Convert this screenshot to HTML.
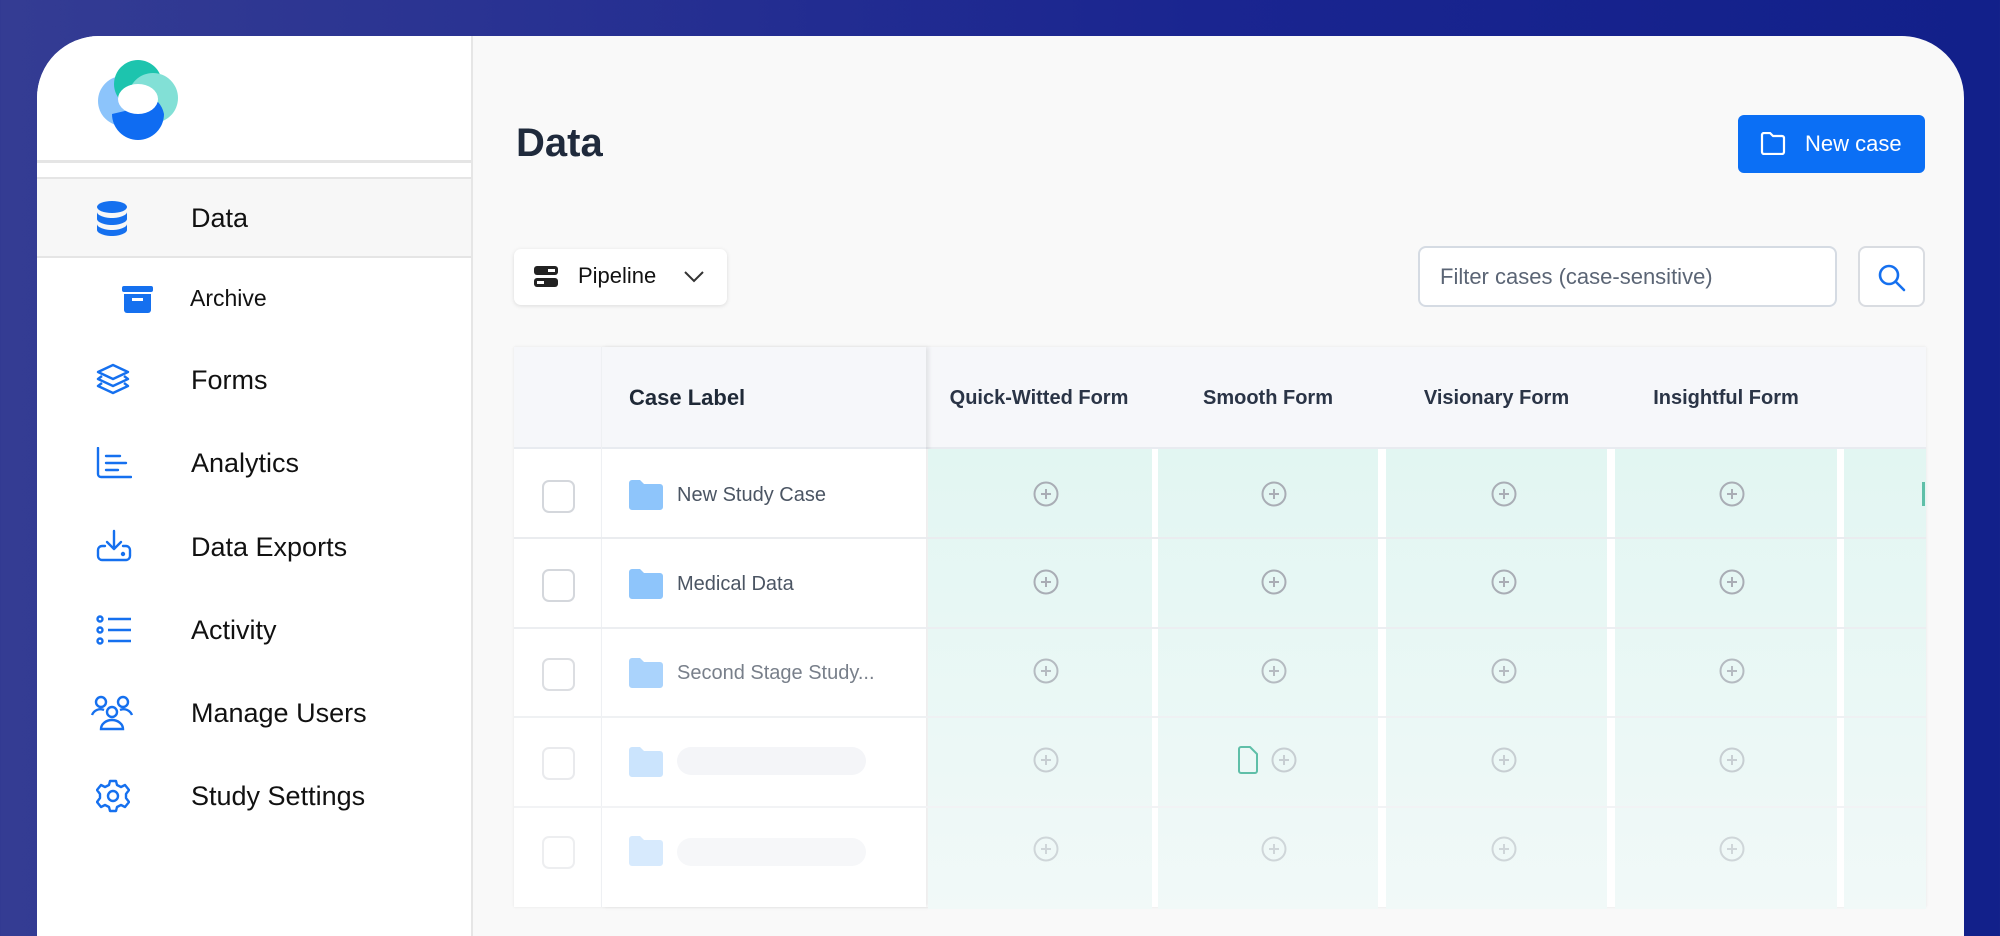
<!DOCTYPE html>
<html><head><meta charset="utf-8"><style>
*{box-sizing:border-box;margin:0;padding:0}
body{width:2000px;height:898px;overflow:hidden;background:linear-gradient(90deg,#343c93,#1a2590 60%,#12208a);font-family:"Liberation Sans",sans-serif;position:relative}
.panel{position:absolute;left:37px;top:36px;width:1927px;height:900px;background:#f9f9f9;border-radius:62px 62px 0 0;overflow:hidden}
.side{position:absolute;left:0;top:0;width:436px;height:900px;background:#fff;border-right:2px solid #e6e6e6}
.abs{position:absolute}
.nav{position:absolute;left:0;font-size:27px;color:#111;display:flex;align-items:center}
.hd{font-weight:bold;color:#2a3446;font-size:20px;position:absolute;top:347px;height:102px;line-height:102px;text-align:center}
.cb{position:absolute;left:542px;width:33px;height:33px;border:2px solid #d4d7dc;border-radius:7px;background:#fff}
.lbl{position:absolute;left:677px;font-size:20px;color:#4b5563}
.pl{position:absolute;width:26px;height:26px}
</style></head><body>
<div class="panel">
<div class="side">
 <svg class="abs" style="left:59px;top:22px" width="84" height="84" viewBox="0 0 84 84">
  <circle cx="27" cy="43" r="25" fill="#8cc4fb"/>
  <circle cx="42" cy="26" r="24" fill="#1dc4ae"/>
  <circle cx="57" cy="40" r="25" fill="#82e0d6"/>
  <path d="M16 56 A25 25 0 0 0 68 56 A25 25 0 0 0 62 44 L42 50 Z" fill="#0f6cf2"/>
  <ellipse cx="42" cy="41" rx="20" ry="15" fill="#fff"/>
 </svg>
 <div class="abs" style="left:0;top:124px;width:434px;height:3px;background:#e5e5e5"></div>
 <div class="abs" style="left:0;top:141px;width:434px;height:81px;background:#f7f7f7;border-top:2px solid #e5e5e5;border-bottom:2px solid #e5e5e5"></div>
 <svg class="abs" style="left:59px;top:165px" width="32" height="35" viewBox="0 0 32 35" fill="#1570ef"><ellipse cx="16" cy="6" rx="15" ry="6"/><path d="M1 11c0 3 7 6 15 6s15-3 15-6v7c0 3-7 6-15 6S1 21 1 18z"/><path d="M1 23c0 3 7 6 15 6s15-3 15-6v6c0 3-7 6-15 6S1 32 1 29z"/></svg>
 <div class="nav" style="left:154px;top:162px;height:40px">Data</div>
 <svg class="abs" style="left:85px;top:250px" width="31" height="27" viewBox="0 0 31 27" fill="#1570ef"><rect x="0" y="0" width="31" height="6" rx="2"/><path d="M2 8h27v16a3 3 0 0 1-3 3H5a3 3 0 0 1-3-3z"/><rect x="10" y="12" width="11" height="3" fill="#fff"/></svg>
 <div class="nav" style="left:153px;top:244px;height:36px;font-size:23px">Archive</div>
 <svg class="abs" style="left:58px;top:326px" width="36" height="36" viewBox="0 0 36 36" fill="none" stroke="#1570ef" stroke-width="2.4" stroke-linejoin="round"><path d="M18 3L33 10 18 17 3 10z"/><path d="M7 14L3 17l15 7 15-7-4-3"/><path d="M7 21l-4 3 15 7 15-7-4-3"/></svg>
 <div class="nav" style="left:154px;top:324px;height:40px">Forms</div>
 <svg class="abs" style="left:59px;top:411px" width="36" height="32" viewBox="0 0 36 32" fill="none" stroke="#1570ef" stroke-width="2.4" stroke-linecap="round"><path d="M2 1v26a3 3 0 0 0 3 3h30"/><path d="M10 9h14M10 16h20M10 23h12"/></svg>
 <div class="nav" style="left:154px;top:407px;height:40px">Analytics</div>
 <svg class="abs" style="left:59px;top:493px" width="36" height="36" viewBox="0 0 36 36" fill="none" stroke="#1570ef" stroke-width="2.4" stroke-linecap="round" stroke-linejoin="round"><path d="M18 2v18M11 13l7 7 7-7"/><path d="M9 17H6a4 4 0 0 0-4 4v6a4 4 0 0 0 4 4h24a4 4 0 0 0 4-4v-6a4 4 0 0 0-4-4h-3"/><circle cx="27" cy="25" r="1" fill="#1570ef"/></svg>
 <div class="nav" style="left:154px;top:491px;height:40px">Data Exports</div>
 <svg class="abs" style="left:59px;top:579px" width="36" height="30" viewBox="0 0 36 30" fill="none" stroke="#1570ef" stroke-width="2.4"><circle cx="4" cy="4" r="2.5"/><circle cx="4" cy="15" r="2.5"/><circle cx="4" cy="26" r="2.5"/><path d="M12 4h23M12 15h23M12 26h23"/></svg>
 <div class="nav" style="left:154px;top:574px;height:40px">Activity</div>
 <svg class="abs" style="left:53px;top:659px" width="44" height="36" viewBox="0 0 44 36" fill="none" stroke="#1570ef" stroke-width="2.4"><circle cx="11" cy="7" r="5"/><circle cx="33" cy="7" r="5"/><circle cx="22" cy="17" r="5"/><path d="M2 20a9 9 0 0 1 12-5M42 20a9 9 0 0 0-12-5"/><path d="M11 34a11 9 0 0 1 22 0z"/></svg>
 <div class="nav" style="left:154px;top:657px;height:40px">Manage Users</div>
 <svg class="abs" style="left:59px;top:743px" width="34" height="34" viewBox="0 0 34 34" fill="none" stroke="#1570ef" stroke-width="2.4" stroke-linejoin="round"><path d="M14 2h6l1 4 4 2 4-2 4 5-3 4v4l3 4-4 5-4-2-4 2-1 4h-6l-1-4-4-2-4 2-4-5 3-4v-4L1 11l4-5 4 2 4-2z"/><circle cx="17" cy="17" r="5"/></svg>
 <div class="nav" style="left:154px;top:740px;height:40px">Study Settings</div>
</div>
</div>
<div class="abs" style="left:516px;top:121px;font-size:40px;font-weight:bold;color:#1f2a3c">Data</div>
<div class="abs" style="left:1738px;top:115px;width:187px;height:58px;background:#0b6ff5;border-radius:6px;color:#fff;font-size:22px;line-height:58px;padding-left:67px">New case</div>
<svg class="abs" style="left:1760px;top:132px" width="26" height="23" viewBox="0 0 26 23" fill="none" stroke="#fff" stroke-width="2.2" stroke-linejoin="round"><path d="M2 3a2 2 0 0 1 2-2h6l3 3h9a2 2 0 0 1 2 2v14a2 2 0 0 1-2 2H4a2 2 0 0 1-2-2z"/></svg>
<div class="abs" style="left:514px;top:249px;width:213px;height:56px;background:#fff;border-radius:7px;box-shadow:0 1px 4px rgba(0,0,0,.12)"></div>
<svg class="abs" style="left:534px;top:266px" width="24" height="22" viewBox="0 0 24 22" fill="#222"><rect x="0" y="0" width="24" height="9" rx="3"/><rect x="0" y="12" width="24" height="9" rx="3"/><rect x="14" y="3" width="7" height="3" fill="#fff"/><rect x="3" y="15" width="7" height="3" fill="#fff"/></svg>
<div class="abs" style="left:578px;top:263px;font-size:22px;color:#111">Pipeline</div>
<svg class="abs" style="left:683px;top:270px" width="22" height="14" viewBox="0 0 22 14" fill="none" stroke="#333" stroke-width="2"><path d="M2 2l9 9 9-9"/></svg>
<div class="abs" style="left:1418px;top:246px;width:419px;height:61px;background:#fff;border:2px solid #d5dbe3;border-radius:8px;font-size:22px;color:#5b6575;line-height:57px;padding-left:20px">Filter cases (case-sensitive)</div>
<div class="abs" style="left:1858px;top:246px;width:67px;height:61px;background:#fff;border:2px solid #d9dce1;border-radius:8px"></div>
<svg class="abs" style="left:1877px;top:263px" width="30" height="30" viewBox="0 0 30 30" fill="none" stroke="#1570ef" stroke-width="2.6" stroke-linecap="round"><circle cx="12" cy="12" r="9"/><path d="M19 19l8 8"/></svg>

<div class="abs" style="left:514px;top:347px;width:1412px;height:560px;background:#fff;box-shadow:0 0 3px rgba(0,0,0,.08)"></div>
<div class="abs" style="left:514px;top:347px;width:1412px;height:102px;background:#f6f7fa;border-bottom:2px solid #e8ebf0"></div>
<div class="abs" style="left:601px;top:347px;width:325px;height:560px;border-left:1px solid #eef0f3;box-shadow:3px 0 4px rgba(0,0,0,.08)"></div>
<div class="hd" style="left:629px;text-align:left;font-size:22px;color:#1f2937">Case Label</div>
<div class="hd" style="left:926px;width:226px">Quick-Witted Form</div>
<div class="hd" style="left:1158px;width:220px">Smooth Form</div>
<div class="hd" style="left:1386px;width:221px">Visionary Form</div>
<div class="hd" style="left:1615px;width:222px">Insightful Form</div>

<div class="abs" style="left:928px;top:449px;width:224px;height:460px;background:linear-gradient(#e2f6f2,#f1f9f8)"></div>
<div class="abs" style="left:1158px;top:449px;width:220px;height:460px;background:linear-gradient(#e2f6f2,#f1f9f8)"></div>
<div class="abs" style="left:1386px;top:449px;width:221px;height:460px;background:linear-gradient(#e2f6f2,#f1f9f8)"></div>
<div class="abs" style="left:1615px;top:449px;width:222px;height:460px;background:linear-gradient(#e2f6f2,#f1f9f8)"></div>
<div class="abs" style="left:1844px;top:449px;width:82px;height:460px;background:linear-gradient(#e2f6f2,#f1f9f8)"></div>
<div class="abs" style="left:1922px;top:482px;width:3px;height:24px;background:#5fbfa8"></div>
<div class="abs" style="left:514px;top:537px;width:1412px;height:2px;background:#eaecef"></div>
<div class="abs" style="left:514px;top:627px;width:1412px;height:2px;background:#eceef1"></div>
<div class="abs" style="left:514px;top:716px;width:1412px;height:2px;background:#eff1f3"></div>
<div class="abs" style="left:514px;top:806px;width:1412px;height:2px;background:#f2f3f5"></div>

<div class="cb" style="top:480px"></div>
<div class="cb" style="top:569px"></div>
<div class="cb" style="top:658px;opacity:.8"></div>
<div class="cb" style="top:747px;opacity:.5"></div>
<div class="cb" style="top:836px;opacity:.4"></div>

<svg class="abs" style="left:629px;top:480px" width="34" height="30" viewBox="0 0 34 30"><path d="M0 3a3 3 0 0 1 3-3h8l4 4h16a3 3 0 0 1 3 3v20a3 3 0 0 1-3 3H3a3 3 0 0 1-3-3z" fill="#8ec5fb"/></svg>
<svg class="abs" style="left:629px;top:569px" width="34" height="30" viewBox="0 0 34 30"><path d="M0 3a3 3 0 0 1 3-3h8l4 4h16a3 3 0 0 1 3 3v20a3 3 0 0 1-3 3H3a3 3 0 0 1-3-3z" fill="#8ec5fb"/></svg>
<svg class="abs" style="left:629px;top:658px;opacity:.75" width="34" height="30" viewBox="0 0 34 30"><path d="M0 3a3 3 0 0 1 3-3h8l4 4h16a3 3 0 0 1 3 3v20a3 3 0 0 1-3 3H3a3 3 0 0 1-3-3z" fill="#8ec5fb"/></svg>
<svg class="abs" style="left:629px;top:747px;opacity:.45" width="34" height="30" viewBox="0 0 34 30"><path d="M0 3a3 3 0 0 1 3-3h8l4 4h16a3 3 0 0 1 3 3v20a3 3 0 0 1-3 3H3a3 3 0 0 1-3-3z" fill="#8ec5fb"/></svg>
<svg class="abs" style="left:629px;top:836px;opacity:.35" width="34" height="30" viewBox="0 0 34 30"><path d="M0 3a3 3 0 0 1 3-3h8l4 4h16a3 3 0 0 1 3 3v20a3 3 0 0 1-3 3H3a3 3 0 0 1-3-3z" fill="#8ec5fb"/></svg>

<div class="lbl" style="top:484px">New Study Case</div>
<div class="lbl" style="top:573px">Medical Data</div>
<div class="lbl" style="top:662px;opacity:.75">Second Stage Study...</div>
<div class="abs" style="left:677px;top:747px;width:189px;height:28px;border-radius:14px;background:#f4f5f8"></div>
<div class="abs" style="left:677px;top:838px;width:189px;height:28px;border-radius:14px;background:#f6f7f9"></div>

<svg width="0" height="0" style="position:absolute"><defs><symbol id="p" viewBox="0 0 26 26"><circle cx="13" cy="13" r="11.5" fill="none" stroke="#a9adb5" stroke-width="2"/><path d="M13 8v10M8 13h10" stroke="#a9adb5" stroke-width="2"/></symbol></defs></svg>
<svg class="pl" style="left:1033px;top:481px"><use href="#p"/></svg>
<svg class="pl" style="left:1261px;top:481px"><use href="#p"/></svg>
<svg class="pl" style="left:1491px;top:481px"><use href="#p"/></svg>
<svg class="pl" style="left:1719px;top:481px"><use href="#p"/></svg>
<svg class="pl" style="left:1033px;top:569px"><use href="#p"/></svg>
<svg class="pl" style="left:1261px;top:569px"><use href="#p"/></svg>
<svg class="pl" style="left:1491px;top:569px"><use href="#p"/></svg>
<svg class="pl" style="left:1719px;top:569px"><use href="#p"/></svg>
<svg class="pl" style="left:1033px;top:658px;opacity:.8"><use href="#p"/></svg>
<svg class="pl" style="left:1261px;top:658px;opacity:.8"><use href="#p"/></svg>
<svg class="pl" style="left:1491px;top:658px;opacity:.8"><use href="#p"/></svg>
<svg class="pl" style="left:1719px;top:658px;opacity:.8"><use href="#p"/></svg>
<svg class="pl" style="left:1033px;top:747px;opacity:.55"><use href="#p"/></svg>
<svg class="pl" style="left:1271px;top:747px;opacity:.55"><use href="#p"/></svg>
<svg class="pl" style="left:1491px;top:747px;opacity:.55"><use href="#p"/></svg>
<svg class="pl" style="left:1719px;top:747px;opacity:.55"><use href="#p"/></svg>
<svg class="abs" style="left:1237px;top:746px" width="22" height="28" viewBox="0 0 22 28" fill="none" stroke="#5fbfa8" stroke-width="2" stroke-linejoin="round"><path d="M2 3a2 2 0 0 1 2-2h9l7 7v17a2 2 0 0 1-2 2H4a2 2 0 0 1-2-2z"/></svg>
<svg class="pl" style="left:1033px;top:836px;opacity:.45"><use href="#p"/></svg>
<svg class="pl" style="left:1261px;top:836px;opacity:.45"><use href="#p"/></svg>
<svg class="pl" style="left:1491px;top:836px;opacity:.45"><use href="#p"/></svg>
<svg class="pl" style="left:1719px;top:836px;opacity:.45"><use href="#p"/></svg>
</body></html>
